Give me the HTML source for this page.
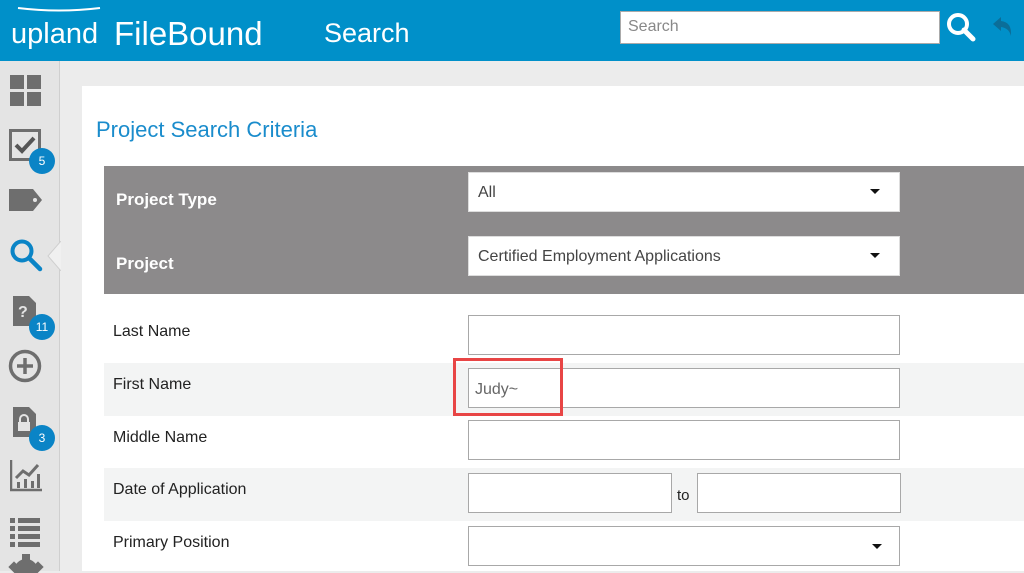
<!DOCTYPE html>
<html><head><style>
*{margin:0;padding:0;box-sizing:border-box}
body{width:1024px;height:571px;overflow:hidden;position:relative;background:#ececec;font-family:"Liberation Sans",sans-serif}
.a{position:absolute}
.hdr{left:0;top:0;width:1024px;height:61px;background:#0090c9}
.side{left:0;top:61px;width:60px;height:510px;background:#e4e4e4;border-right:1px solid #cfcfcf}
.panel{left:82px;top:86px;width:942px;height:485px;background:#fff}
.inp{position:absolute;background:#fff;border:1px solid #a8a8a8;height:40px}
.lbl{position:absolute;left:113px;font-size:16px;color:#222}
.badge{position:absolute;width:26px;height:26px;border-radius:50%;background:#0a84c6;color:#fff;font-size:12px;text-align:center;line-height:26px}
.caret{position:absolute;width:0;height:0;border-left:5px solid transparent;border-right:5px solid transparent;border-top:5px solid #111}
</style></head><body>
<div class="a hdr">
  <svg class="a" style="left:17px;top:6px" width="84" height="8"><path d="M1 2 Q42 7 83 2" stroke="#fff" stroke-width="2" fill="none"/></svg>
  <div class="a" style="left:11px;top:18px;color:#fff;font-size:29px">upland</div>
  <div class="a" style="left:114px;top:15px;color:#fff;font-size:33px">FileBound</div>
  <div class="a" style="left:324px;top:18px;color:#fff;font-size:27px">Search</div>
  <div class="a" style="left:620px;top:11px;width:320px;height:33px;background:#fff;border:1px solid #aaa;color:#888;font-size:16px;padding:6px 7px">Search</div>
  <svg class="a" style="left:945px;top:11px" width="32" height="32"><circle cx="13" cy="13" r="9" stroke="#fff" stroke-width="4" fill="none"/><path d="M19 19 L28 28" stroke="#fff" stroke-width="5" stroke-linecap="round"/></svg>
  <svg class="a" style="left:990px;top:14px" width="26" height="30"><path d="M3 10 L11 3 L11 7 Q22 8 21 22 Q19 14 11 13 L11 17 Z" fill="#0b6e99"/></svg>
</div>
<div class="a side">
  <svg class="a" style="left:10px;top:14px" width="32" height="32" fill="#6e6e6e"><rect x="0" y="0" width="14" height="14"/><rect x="17" y="0" width="14" height="14"/><rect x="0" y="17" width="14" height="14"/><rect x="17" y="17" width="14" height="14"/></svg>
  <svg class="a" style="left:9px;top:68px" width="34" height="34"><rect x="1.5" y="1.5" width="29" height="29" fill="none" stroke="#6e6e6e" stroke-width="3"/><path d="M7 16 L13 22 L25 9" stroke="#555" stroke-width="4" fill="none"/></svg>
  <div class="badge" style="left:29px;top:87px">5</div>
  <svg class="a" style="left:9px;top:128px" width="34" height="24"><path d="M0 0 H24 L33 11 L24 22 H0 Z" fill="#6e6e6e"/><circle cx="26" cy="11" r="2" fill="#e4e4e4"/></svg>
  <svg class="a" style="left:9px;top:177px" width="34" height="36"><circle cx="13" cy="13" r="9.5" stroke="#0a84c6" stroke-width="4" fill="none"/><path d="M20 20 L31 31" stroke="#0a84c6" stroke-width="4.5" stroke-linecap="round"/></svg>
  <svg class="a" style="left:47px;top:180px" width="14" height="30"><path d="M14 0 L1 15 L14 30" fill="#f0f0f0" stroke="#cfcfcf"/></svg>
  <svg class="a" style="left:13px;top:235px" width="24" height="30"><path d="M0 0 H16 L23 7 V30 H0 Z" fill="#6e6e6e"/><text x="5" y="21" font-size="16" font-weight="bold" fill="#e4e4e4" font-family="Liberation Sans">?</text></svg>
  <div class="badge" style="left:29px;top:253px">11</div>
  <svg class="a" style="left:8px;top:288px" width="36" height="36"><circle cx="17" cy="17" r="14.5" stroke="#6e6e6e" stroke-width="3.5" fill="none"/><path d="M17 9 V25 M9 17 H25" stroke="#6e6e6e" stroke-width="3.5"/></svg>
  <svg class="a" style="left:13px;top:346px" width="24" height="30"><path d="M0 0 H16 L23 7 V30 H0 Z" fill="#6e6e6e"/><rect x="5" y="15" width="12" height="9" fill="#e4e4e4"/><path d="M7 15 V12 A4 4 0 0 1 15 12 V15" stroke="#e4e4e4" stroke-width="2" fill="none"/></svg>
  <div class="badge" style="left:29px;top:364px">3</div>
  <svg class="a" style="left:10px;top:399px" width="32" height="32"><path d="M1 0 V30 H32" stroke="#6e6e6e" stroke-width="2.5" fill="none"/><path d="M6 18 L13 11 L19 15 L28 5" stroke="#6e6e6e" stroke-width="3" fill="none"/><rect x="7" y="22" width="3" height="6" fill="#6e6e6e"/><rect x="14" y="19" width="3" height="9" fill="#6e6e6e"/><rect x="21" y="21" width="3" height="7" fill="#6e6e6e"/><rect x="27" y="14" width="3" height="14" fill="#6e6e6e"/></svg>
  <svg class="a" style="left:10px;top:457px" width="32" height="30" fill="#6e6e6e"><rect x="0" y="0" width="5" height="5"/><rect x="8" y="0" width="22" height="5"/><rect x="0" y="8" width="5" height="5"/><rect x="8" y="8" width="22" height="5"/><rect x="0" y="16" width="5" height="5"/><rect x="8" y="16" width="22" height="5"/><rect x="0" y="24" width="5" height="5"/><rect x="8" y="24" width="22" height="5"/></svg>
  <svg class="a" style="left:8px;top:492px" width="36" height="20"><circle cx="18" cy="18" r="12" fill="#6e6e6e"/><rect x="14" y="1" width="8" height="8" fill="#6e6e6e"/><rect x="2" y="10" width="8" height="8" fill="#6e6e6e" transform="rotate(-45 6 14)"/><rect x="26" y="10" width="8" height="8" fill="#6e6e6e" transform="rotate(45 30 14)"/></svg>
</div>
<div class="a panel"></div>
<div class="a" style="left:96px;top:117px;font-size:22px;color:#1a8ccc">Project Search Criteria</div>
<div class="a" style="left:104px;top:166px;width:920px;height:128px;background:#8c8a8b"></div>
<div class="a" style="left:116px;top:190px;font-size:17px;font-weight:bold;color:#fff">Project Type</div>
<div class="a" style="left:116px;top:254px;font-size:17px;font-weight:bold;color:#fff">Project</div>
<div class="inp" style="left:468px;top:172px;width:432px;border-color:#ddd;padding:11px 9px;font-size:16px;color:#444">All</div>
<div class="caret" style="left:870px;top:189px"></div>
<div class="inp" style="left:468px;top:236px;width:432px;border-color:#ddd;padding:11px 9px;font-size:16px;color:#444">Certified Employment Applications</div>
<div class="caret" style="left:870px;top:253px"></div>
<div class="a" style="left:104px;top:363px;width:920px;height:53px;background:#f3f4f4"></div>
<div class="a" style="left:104px;top:468px;width:920px;height:53px;background:#f3f4f4"></div>
<div class="lbl" style="top:323px">Last Name</div>
<div class="lbl" style="top:376px">First Name</div>
<div class="lbl" style="top:429px">Middle Name</div>
<div class="lbl" style="top:481px">Date of Application</div>
<div class="lbl" style="top:534px">Primary Position</div>
<div class="inp" style="left:468px;top:315px;width:432px"></div>
<div class="inp" style="left:468px;top:368px;width:432px;padding:12px 6px;font-size:16px;color:#666">Judy~</div>
<div class="a" style="left:453px;top:358px;width:110px;height:58px;border:3px solid #e84545"></div>
<div class="inp" style="left:468px;top:420px;width:432px"></div>
<div class="inp" style="left:468px;top:473px;width:204px"></div>
<div class="a" style="left:677px;top:487px;font-size:15px;color:#222">to</div>
<div class="inp" style="left:697px;top:473px;width:204px"></div>
<div class="inp" style="left:468px;top:526px;width:432px"></div>
<div class="caret" style="left:872px;top:544px"></div>
</body></html>
